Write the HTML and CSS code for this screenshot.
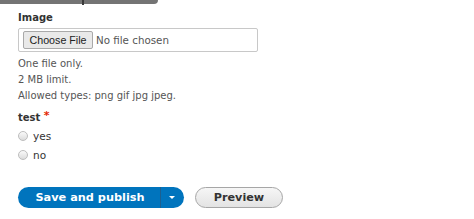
FILE: index.html
```html
<!DOCTYPE html>
<html>
<head>
<meta charset="utf-8">
<link rel="stylesheet" href="styles.css">
</head>
<body>
<div class="topbar"><span class="topbar-mark"></span></div>
<div class="form">
  <div class="field">
    <div class="label">Image</div>
    <div class="file-box">
      <span class="file-btn">Choose File</span>
      <span class="file-status">No file chosen</span>
    </div>
    <div class="desc">
      <div class="desc-line">One file only.</div>
      <div class="desc-line">2 MB limit.</div>
      <div class="desc-line">Allowed types: png gif jpg jpeg.</div>
    </div>
  </div>
  <div class="field field-radios">
    <div class="label">test <span class="req">*</span></div>
    <div class="radio"><span class="radio-dot"></span><span class="radio-text">yes</span></div>
    <div class="radio"><span class="radio-dot"></span><span class="radio-text">no</span></div>
  </div>
  <div class="actions">
    <div class="split">
      <span class="split-main">Save and publish</span>
      <span class="split-toggle"><span class="caret"></span></span>
    </div>
    <span class="btn-preview">Preview</span>
  </div>
</div>
</body>
</html>
```
FILE: styles.css
```css
html, body {
  margin: 0;
  padding: 0;
  background: #ffffff;
}
body {
  font-family: "DejaVu Sans", sans-serif;
  color: #333;
  width: 474px;
  height: 219px;
  overflow: hidden;
}
.topbar {
  width: 158px;
  height: 4px;
  background: #747474;
  border-bottom-right-radius: 4px;
  display: flex;
}
.topbar-mark {
  width: 2px;
  height: 5px;
  margin-left: 82px;
  background: #3a3a3a;
}
.form {
  padding-left: 18px;
}
.field {
  display: flex;
  flex-direction: column;
}
.label {
  margin-top: 7px;
  font-weight: bold;
  font-size: 10px;
  line-height: 14px;
  color: #333;
}
.file-box {
  margin-top: 3px;
  width: 238px;
  height: 22px;
  border: 1px solid #c8c8c8;
  border-radius: 2px;
  display: flex;
  align-items: center;
  box-sizing: content-box;
}
.file-btn {
  margin-left: 4px;
  width: 68px;
  height: 16px;
  border: 1px solid #a9a9a9;
  border-radius: 2px;
  background: #e9e9e9;
  font-family: "Liberation Sans", Arial, sans-serif;
  font-size: 10.7px;
  line-height: 16px;
  text-align: center;
  color: #222;
}
.file-status {
  margin-left: 3px;
  font-size: 10.3px;
  color: #555;
}
.desc {
  margin-top: 4px;
  font-size: 10px;
  line-height: 16px;
  color: #555;
}
.field-radios .label {
  margin-top: 7px;
}
.req {
  color: #e32700;
  font-size: 11px;
  position: relative;
  top: -2px;
}
.radio {
  display: flex;
  align-items: center;
  height: 19px;
  margin-top: 1px;
}
.radio + .radio {
  margin-top: 0;
}
.radio-dot {
  width: 8px;
  height: 8px;
  border: 1px solid #bdbdbd;
  border-radius: 50%;
  background: linear-gradient(#fafafa, #dcdcdc);
}
.radio-text {
  margin-left: 5px;
  font-size: 10.5px;
  color: #333;
}
.actions {
  margin-top: 23px;
  display: flex;
  align-items: center;
}
.split {
  width: 166px;
  height: 21px;
  border-radius: 11px;
  background: #0074bd;
  display: flex;
  color: #fff;
  font-weight: bold;
  font-size: 11.3px;
}
.split-main {
  width: 143px;
  line-height: 21px;
  text-align: center;
  border-right: 1px solid #1d5f8f;
  padding-left: 2px;
  box-sizing: border-box;
}
.split-toggle {
  flex: 1;
  display: flex;
  align-items: center;
  justify-content: center;
  padding-right: 1px;
}
.caret {
  width: 0;
  height: 0;
  border-left: 3px solid transparent;
  border-right: 3px solid transparent;
  border-top: 3px solid #ffffff;
}
.btn-preview {
  margin-left: 11px;
  width: 86px;
  height: 19px;
  border: 1px solid #a6a6a6;
  border-radius: 11px;
  background: linear-gradient(#f6f6f6, #e3e3e3);
  font-weight: bold;
  font-size: 11.2px;
  line-height: 19px;
  text-align: center;
  color: #333;
}
```
